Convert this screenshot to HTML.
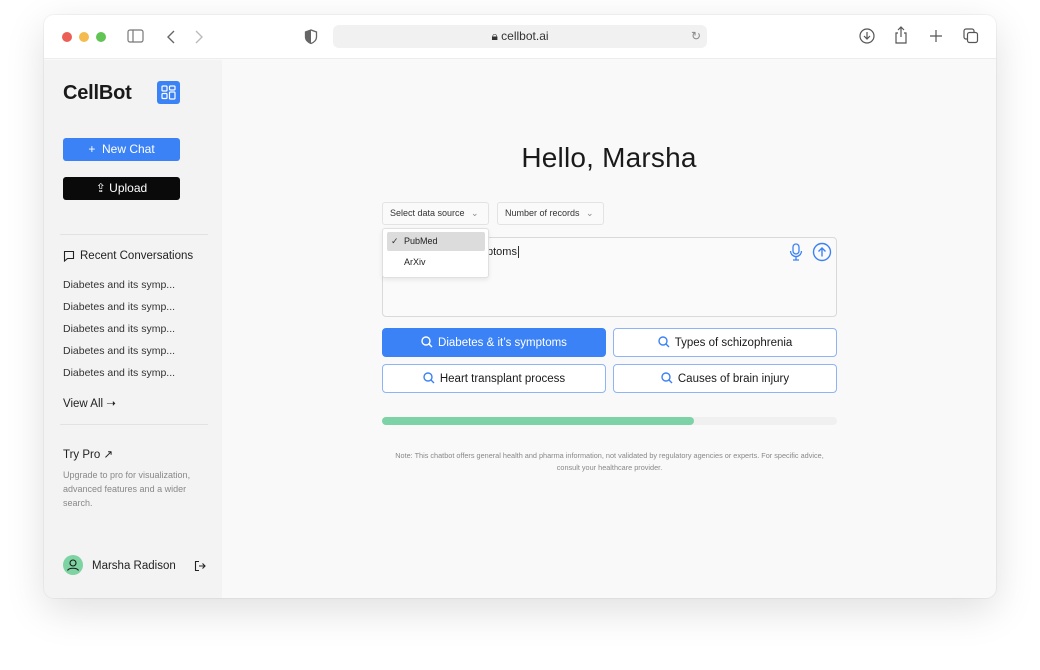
<!DOCTYPE html>
<html><head><meta charset="utf-8"><style>
*{box-sizing:border-box;margin:0;padding:0}
body{width:1040px;height:670px;background:#fff;font-family:"Liberation Sans",sans-serif;position:relative;overflow:hidden;color:#1a1a1a}
.win{position:absolute;left:44px;top:15px;width:952px;height:583px;border-radius:10px;overflow:hidden;box-shadow:0 12px 40px rgba(0,0,0,.13),0 0 0 1px rgba(0,0,0,.04);background:#f9f9f9}
.bar{position:absolute;left:0;top:0;width:952px;height:44px;background:#fff;border-bottom:1px solid #ececec}
.dot{position:absolute;top:17px;width:10px;height:10px;border-radius:50%}
.url{position:absolute;left:289px;top:10px;width:374px;height:23px;background:#f1f1f1;border-radius:6px;font-size:12px;color:#333;text-align:center;line-height:23px}
.side{position:absolute;left:0;top:45px;width:178px;height:538px;background:#f3f3f3}
.abs{position:absolute}
.btn{position:absolute;left:19px;width:117px;height:23px;border-radius:3px;color:#fff;font-size:12px;text-align:center;line-height:23px}
.conv{position:absolute;left:19px;font-size:10.5px;color:#333}
.hr{position:absolute;left:16px;width:148px;height:1px;background:#e2e2e2}
.sel{position:absolute;top:187px;height:23px;border:1px solid #e3e3e3;border-radius:3px;background:#fafafa;font-size:9px;color:#333;line-height:21px;padding-left:7px}
.chip{position:absolute;width:224px;height:29px;border:1px solid #8fb4f5;border-radius:4px;background:#fff;font-size:11.5px;text-align:center;line-height:28px;color:#1a1a1a}
.chip svg{vertical-align:-2px;margin-right:5px}
</style></head><body>
<div class="win">
 <div class="bar">
  <div class="dot" style="left:18px;background:#ec5f56"></div>
  <div class="dot" style="left:35px;background:#f4bc4f"></div>
  <div class="dot" style="left:52px;background:#61c454"></div>
  <svg class="abs" style="left:83px;top:14px" width="18" height="15"><rect x="1" y="1" width="15" height="12" rx="2" fill="none" stroke="#777" stroke-width="1.2"/><line x1="6" y1="1" x2="6" y2="13" stroke="#777" stroke-width="1.2"/></svg>
  <svg class="abs" style="left:122px;top:14px" width="10" height="16"><path d="M8 2L2 8l6 6" fill="none" stroke="#666" stroke-width="1.4"/></svg>
  <svg class="abs" style="left:150px;top:14px" width="10" height="16"><path d="M2 2l6 6-6 6" fill="none" stroke="#bbb" stroke-width="1.4"/></svg>
  <svg class="abs" style="left:260px;top:14px" width="14" height="16"><path d="M7 1L1.5 3v5c0 3 2.5 5.5 5.5 6.5 3-1 5.5-3.5 5.5-6.5V3z" fill="none" stroke="#666" stroke-width="1.3"/><path d="M7 1v13.5c-3-1-5.5-3.5-5.5-6.5V3z" fill="#666"/></svg>
  <div class="url">🔒︎ cellbot.ai<span style="position:absolute;right:6px;color:#888">↻</span></div>
  <svg class="abs" style="left:815px;top:13px" width="16" height="16"><circle cx="8" cy="8" r="7" fill="none" stroke="#555" stroke-width="1.2"/><path d="M8 4v7M5 8l3 3 3-3" fill="none" stroke="#555" stroke-width="1.2"/></svg>
  <svg class="abs" style="left:850px;top:11px" width="14" height="18"><path d="M4 7H2v10h10V7h-2M7 1v10M4 4l3-3 3 3" fill="none" stroke="#555" stroke-width="1.2"/></svg>
  <svg class="abs" style="left:885px;top:14px" width="14" height="14"><path d="M7 1v12M1 7h12" stroke="#555" stroke-width="1.2"/></svg>
  <svg class="abs" style="left:919px;top:13px" width="16" height="16"><rect x="1" y="1" width="10" height="10" rx="2" fill="none" stroke="#555" stroke-width="1.2"/><rect x="4.5" y="4.5" width="10" height="10" rx="2" fill="#fff" stroke="#555" stroke-width="1.2"/></svg>
 </div>
 <div class="side">
  <div class="abs" style="left:19px;top:22px;font-size:20px;font-weight:bold;color:#1a1a1a;letter-spacing:-.2px">CellBot</div>
  <div class="abs" style="left:113px;top:21px;width:23px;height:23px;background:#3b82f6;border-radius:3px"></div>
  <svg class="abs" style="left:113px;top:21px" width="23" height="23"><rect x="5" y="5" width="5" height="5" rx="1" fill="none" stroke="#fff" stroke-width="1.2"/><rect x="12.5" y="5" width="5.5" height="4" rx="1" fill="none" stroke="#fff" stroke-width="1.2"/><rect x="5" y="12.5" width="5" height="5" rx="1" fill="none" stroke="#fff" stroke-width="1.2"/><rect x="12.5" y="11" width="5.5" height="7" rx="1" fill="none" stroke="#fff" stroke-width="1.2"/></svg>
  <div class="btn" style="top:78px;background:#3b82f6">+&nbsp; New Chat</div>
  <div class="btn" style="top:117px;background:#0a0a0a">⇪ Upload</div>
  <div class="hr" style="top:174px"></div>
  <svg class="abs" style="left:19px;top:190px" width="12" height="12"><path d="M1.5 1.5h9v7h-6l-3 2.5z" fill="none" stroke="#222" stroke-width="1.1"/></svg>
  <div class="abs" style="left:36px;top:190px;font-size:11.5px;color:#222">Recent Conversations</div>
  <div class="conv" style="top:219px">Diabetes and its symp...</div>
  <div class="conv" style="top:241px">Diabetes and its symp...</div>
  <div class="conv" style="top:263px">Diabetes and its symp...</div>
  <div class="conv" style="top:285px">Diabetes and its symp...</div>
  <div class="conv" style="top:307px">Diabetes and its symp...</div>
  <div class="abs" style="left:19px;top:336px;font-size:11.5px;color:#222">View All ➝</div>
  <div class="hr" style="top:364px"></div>
  <div class="abs" style="left:19px;top:387px;font-size:11.5px;color:#222">Try Pro ↗</div>
  <div class="abs" style="left:19px;top:408px;font-size:9px;color:#888;line-height:14px;width:150px">Upgrade to pro for visualization, advanced features and a wider search.</div>
  <svg class="abs" style="left:19px;top:495px" width="20" height="20"><circle cx="10" cy="10" r="10" fill="#7ed3a2"/><circle cx="10" cy="8" r="3" fill="none" stroke="#1a1a1a" stroke-width="1.1"/><path d="M4.5 15.5c1.5-3 9.5-3 11 0" fill="none" stroke="#1a1a1a" stroke-width="1.1"/></svg>
  <div class="abs" style="left:48px;top:500px;font-size:11.5px;color:#222">Marsha Radison</div>
  <svg class="abs" style="left:150px;top:500px" width="12" height="12"><path d="M5 1.5H1.5v9H5M5 6h6M8.5 3.5L11 6 8.5 8.5" fill="none" stroke="#222" stroke-width="1.1"/></svg>
 </div>
 <div class="abs" style="left:178px;top:127px;width:774px;text-align:center;font-size:28px;color:#1a1a1a;letter-spacing:.2px">Hello, Marsha</div>
 <div class="sel" style="left:338px;width:107px">Select data source <span style="color:#888;margin-left:4px">⌄</span></div>
 <div class="sel" style="left:453px;width:107px">Number of records <span style="color:#888;margin-left:4px">⌄</span></div>
 <div class="abs" style="left:338px;top:222px;width:455px;height:80px;border:1px solid #d9d9d9;border-radius:4px;background:#fafafa"></div>
 <div class="abs" style="left:443px;top:231px;font-size:11px;color:#222">ptoms<span style="border-left:1px solid #333;margin-left:1px"></span></div>
 <svg class="abs" style="left:745px;top:228px" width="14" height="18"><rect x="4" y="1" width="6" height="10" rx="3" fill="none" stroke="#3b82f6" stroke-width="1.3"/><path d="M1.5 8a5.5 5.5 0 0 0 11 0M7 13.5V17M4 17h6" fill="none" stroke="#3b82f6" stroke-width="1.3"/></svg>
 <svg class="abs" style="left:768px;top:227px" width="20" height="20"><circle cx="10" cy="10" r="8.5" fill="none" stroke="#3b82f6" stroke-width="1.4"/><path d="M10 14.5V6M6.5 9.5L10 6l3.5 3.5" fill="none" stroke="#3b82f6" stroke-width="1.4"/></svg>
 <div class="abs" style="left:338px;top:213px;width:107px;height:50px;background:#fff;border:1px solid #e0e0e0;border-radius:3px;box-shadow:0 2px 5px rgba(0,0,0,.08)">
  <div class="abs" style="left:4px;top:3px;width:98px;height:19px;background:#dcdcdc;border-radius:2px"></div>
  <div class="abs" style="left:8px;top:7px;font-size:9px;color:#333">✓</div>
  <div class="abs" style="left:21px;top:7px;font-size:9px;color:#222">PubMed</div>
  <div class="abs" style="left:21px;top:28px;font-size:9px;color:#222">ArXiv</div>
 </div>
 <div class="chip" style="left:338px;top:313px;background:#3b82f6;border-color:#3b82f6;color:#fff"><svg width="12" height="12"><circle cx="5" cy="5" r="4" fill="none" stroke="#fff" stroke-width="1.4"/><path d="M8 8l3 3" stroke="#fff" stroke-width="1.4"/></svg>Diabetes &amp; it’s symptoms</div>
 <div class="chip" style="left:569px;top:313px"><svg width="12" height="12"><circle cx="5" cy="5" r="4" fill="none" stroke="#3b82f6" stroke-width="1.4"/><path d="M8 8l3 3" stroke="#3b82f6" stroke-width="1.4"/></svg>Types of schizophrenia</div>
 <div class="chip" style="left:338px;top:349px"><svg width="12" height="12"><circle cx="5" cy="5" r="4" fill="none" stroke="#3b82f6" stroke-width="1.4"/><path d="M8 8l3 3" stroke="#3b82f6" stroke-width="1.4"/></svg>Heart transplant process</div>
 <div class="chip" style="left:569px;top:349px"><svg width="12" height="12"><circle cx="5" cy="5" r="4" fill="none" stroke="#3b82f6" stroke-width="1.4"/><path d="M8 8l3 3" stroke="#3b82f6" stroke-width="1.4"/></svg>Causes of brain injury</div>
 <div class="abs" style="left:338px;top:402px;width:455px;height:8px;background:#f0f0f0;border-radius:4px"></div>
 <div class="abs" style="left:338px;top:402px;width:312px;height:8px;background:#7ed3a6;border-radius:4px"></div>
 <div class="abs" style="left:336px;top:435px;width:459px;text-align:center;font-size:7.3px;color:#888;line-height:12px">Note: This chatbot offers general health and pharma information, not validated by regulatory agencies or experts. For specific advice,<br>consult your healthcare provider.</div>
</div>
</body></html>
